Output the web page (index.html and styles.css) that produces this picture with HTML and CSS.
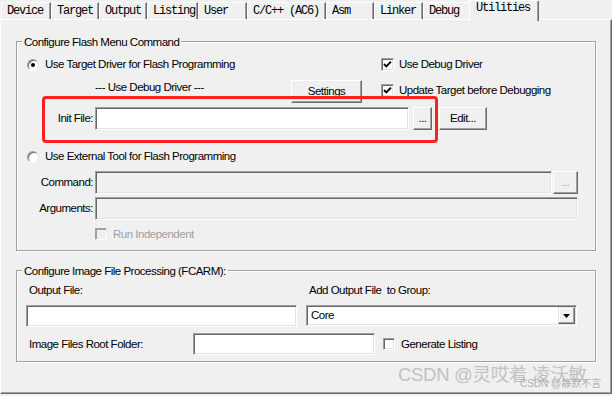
FILE: index.html
```html
<!DOCTYPE html>
<html lang="en">
<head>
    <meta charset="UTF-8">
    <title>Options for Target - Utilities</title>
    <link rel="stylesheet" href="styles.css">
</head>
<body>
    <div class="dialog">
        <div class="tabs">
            <div class="tab t-device">Device</div>
            <div class="tab t-target">Target</div>
            <div class="tab t-output">Output</div>
            <div class="tab t-listing">Listing</div>
            <div class="tab t-user">User</div>
            <div class="tab t-cc">C/C++ (AC6)</div>
            <div class="tab t-asm">Asm</div>
            <div class="tab t-linker">Linker</div>
            <div class="tab t-debug">Debug</div>
            <div class="tab active t-util">Utilities</div>
        </div>

        <div class="panel">
            <!-- Flash menu -->
            <div class="group flash">
                <div class="group-title">Configure Flash Menu Command</div>

                <div class="row r1">
                    <label class="opt driver"><span class="radio on"></span>Use Target Driver for Flash Programming</label>
                    <label class="opt chk"><span class="check"><svg viewBox="0 0 11 11" width="11" height="11"><polyline points="2,5 4.3,7.3 9,2.6" fill="none" stroke="#000" stroke-width="1.9"/></svg></span>Use Debug Driver</label>
                </div>

                <div class="row r2">
                    <span class="note">--- Use Debug Driver ---</span>
                    <button class="btn settings">Settings</button>
                    <label class="opt chk update"><span class="check"><svg viewBox="0 0 11 11" width="11" height="11"><polyline points="2,5 4.3,7.3 9,2.6" fill="none" stroke="#000" stroke-width="1.9"/></svg></span>Update Target before Debugging</label>
                </div>

                <div class="row r3">
                    <span class="field-label">Init File:</span>
                    <input type="text" class="input init">
                    <button class="btn browse">...</button>
                    <button class="btn edit">Edit...</button>
                </div>

                <div class="row r4">
                    <label class="opt driver"><span class="radio"></span>Use External Tool for Flash Programming</label>
                </div>

                <div class="row r5">
                    <span class="field-label">Command:</span>
                    <input type="text" class="input command" disabled>
                    <button class="btn browse-ext" disabled>...</button>
                </div>

                <div class="row r6">
                    <span class="field-label">Arguments:</span>
                    <input type="text" class="input arguments" disabled>
                </div>

                <div class="row r7">
                    <label class="opt chk off"><span class="check disabled"></span>Run Independent</label>
                </div>
            </div>

            <!-- FCARM -->
            <div class="group fcarm">
                <div class="group-title">Configure Image File Processing (FCARM):</div>

                <div class="row g1">
                    <span class="out-label">Output File:</span>
                    <span>Add Output File&nbsp; to Group:</span>
                </div>

                <div class="row g2">
                    <input type="text" class="input output">
                    <div class="select">
                        <span>Core</span>
                        <span class="drop"><svg viewBox="0 0 7 4" width="7" height="4"><polygon points="0,0 7,0 3.5,4" fill="#000"/></svg></span>
                    </div>
                </div>

                <div class="row g3">
                    <span class="root-label">Image Files Root Folder:</span>
                    <input type="text" class="input root">
                    <label class="opt chk listing"><span class="check"></span>Generate Listing</label>
                </div>
            </div>
        </div>

        <div class="highlight"></div>
        <div class="watermark">CSDN @灵哎着 凌沃敏</div>
        <div class="watermark small">CSDN @静默不言</div>
    </div>
</body>
</html>
```

FILE: styles.css
```css
/* Base */
body {
    margin: 0;
    background: #f0f0f0;
    font-family: "Liberation Sans", Arial, sans-serif;
    font-size: 11.5px;
    letter-spacing: -0.5px;
    line-height: 13px;
    color: #000;
}

.dialog {
    position: relative;
    width: 612px;
    height: 396px;
    overflow: hidden;
}

/* Tabs */
.tabs {
    display: flex;
    align-items: flex-end;
    height: 19px;
    padding-left: 1px;
    font-family: "Liberation Mono", "Courier New", monospace;
    font-size: 12px;
    letter-spacing: -1.2px;
}

.tab {
    box-sizing: border-box;
    height: 17px;
    padding: 1px 0 0 5px;
    line-height: 15px;
    border-top: 1px solid #fff;
    border-left: 1px solid #fff;
    border-right: 1px solid #696969;
    box-shadow: inset -1px 0 #a0a0a0;
    white-space: nowrap;
}

.t-device { width: 50px; }
.t-target { width: 48px; }
.t-output { width: 48px; }
.t-listing { width: 51px; }
.t-user { width: 49px; }
.t-cc { width: 79px; }
.t-asm { width: 48px; }
.t-linker { width: 49px; }
.t-debug { width: 48px; }

.tab.active {
    position: relative;
    z-index: 1;
    width: 70px;
    height: 21px;
    margin: 0 0 -2px -2px;
    padding: 0 0 0 6px;
    line-height: 14px;
    background: #f0f0f0;
    border-radius: 2px 2px 0 0;
}

/* Panel */
.panel {
    box-sizing: border-box;
    height: 375px;
    padding-left: 15px;
    border-top: 1px solid #fff;
    border-left: 1px solid #fff;
    border-right: 1px solid #696969;
    border-bottom: 1px solid #696969;
    box-shadow: inset -1px -1px #a0a0a0;
}

.group {
    box-sizing: border-box;
    width: 580px;
    border: 1px solid #a0a0a0;
    box-shadow: inset 1px 1px #fff, 1px 1px #fff;
}

.flash {
    margin-top: 21px;
    padding-bottom: 10px;
}

.fcarm {
    margin-top: 19px;
    padding-bottom: 6px;
}

.group-title {
    display: table;
    margin: -7px 0 0 5px;
    padding: 0 2px;
    line-height: 14px;
    background: #f0f0f0;
}

.row {
    display: flex;
    align-items: center;
}

.r1 { height: 13px; margin-top: 9px; }
.r2 { height: 23px; margin-top: 9px; align-items: flex-start; }
.r3 { height: 23px; margin-top: 4px; }
.r4 { height: 13px; margin-top: 20px; }
.r5 { height: 23px; margin-top: 8px; }
.r6 { height: 23px; margin-top: 3px; }
.r7 { height: 12px; margin-top: 8px; }

.g1 { height: 13px; margin-top: 6px; }
.g2 { height: 22px; margin-top: 8px; }
.g3 { height: 22px; margin-top: 6px; }

/* Options */
.opt {
    display: flex;
    align-items: center;
    gap: 6px;
    white-space: nowrap;
}

.driver {
    width: 354px;
    margin-left: 10px;
}

.chk { gap: 5px; }

.off { color: #a0a0a0; margin-left: 78px; gap: 6px; }

.radio {
    box-sizing: border-box;
    position: relative;
    width: 12px;
    height: 12px;
    border-radius: 50%;
    background: #fff;
    border: 1px solid;
    border-color: #a0a0a0 #e3e3e3 #fff #a0a0a0;
    box-shadow: inset 1px 1px #696969;
}

.radio.on::after {
    content: "";
    position: absolute;
    left: 3px;
    top: 3px;
    width: 4px;
    height: 4px;
    border-radius: 50%;
    background: #000;
}

.check {
    box-sizing: border-box;
    display: flex;
    width: 13px;
    height: 13px;
    background: #fff;
    border: 1px solid;
    border-color: #a0a0a0 #fff #fff #a0a0a0;
    box-shadow: inset 1px 1px #696969, inset -1px -1px #e3e3e3;
}

.check.disabled {
    width: 12px;
    height: 12px;
    background: #f0f0f0;
    box-shadow: inset 1px 1px #a0a0a0;
}

.note {
    width: 196px;
    margin: 1px 0 0 78px;
    white-space: nowrap;
}

.update { margin: 4px 0 0 19px; }

.field-label {
    width: 76px;
    text-align: right;
    white-space: nowrap;
}

/* Inputs and buttons */
.input {
    box-sizing: border-box;
    height: 23px;
    margin: 0;
    padding: 0 3px;
    font: inherit;
    background: #fff;
    border: 1px solid;
    border-color: #a0a0a0 #fff #fff #a0a0a0;
    box-shadow: inset 1px 1px #696969, inset -1px -1px #e3e3e3;
    outline: none;
}

.input:disabled { background: #f0f0f0; }

.init { width: 314px; margin-left: 2px; }
.command { width: 457px; margin-left: 2px; }
.arguments { width: 483px; margin-left: 2px; }
.output { width: 271px; height: 22px; margin-left: 9px; }
.root { width: 182px; height: 22px; }

.btn {
    box-sizing: border-box;
    height: 23px;
    margin: 0;
    padding: 0;
    font: inherit;
    letter-spacing: inherit;
    line-height: 13px;
    color: #000;
    background: #f0f0f0;
    border: 1px solid;
    border-color: #fff #696969 #696969 #fff;
    box-shadow: inset -1px -1px #a0a0a0;
}

.btn:disabled { color: #a0a0a0; }

.settings { width: 71px; }
.browse { width: 19px; margin-left: 4px; }
.edit { width: 48px; margin-left: 7px; }
.browse-ext { width: 25px; margin-left: 1px; }

.out-label { width: 280px; margin-left: 12px; }
.root-label { width: 164px; margin-left: 12px; }
.listing { margin-left: 8px; gap: 6px; }
.listing .check { width: 12px; height: 12px; }

.select {
    box-sizing: border-box;
    display: flex;
    align-items: center;
    justify-content: space-between;
    width: 271px;
    height: 21px;
    margin: 0 0 1px 9px;
    padding: 1px 1px 1px 4px;
    background: #fff;
    border: 1px solid;
    border-color: #a0a0a0 #fff #fff #a0a0a0;
    box-shadow: inset 1px 1px #696969, inset -1px -1px #e3e3e3;
}

.drop {
    box-sizing: border-box;
    display: flex;
    align-items: center;
    justify-content: center;
    width: 17px;
    height: 17px;
    background: #f0f0f0;
    border: 1px solid;
    border-color: #e3e3e3 #696969 #696969 #e3e3e3;
    box-shadow: inset -1px -1px #a0a0a0, inset 1px 1px #fff;
}

/* Annotation and watermark lying over the dialog */
.highlight {
    position: absolute;
    left: 42px;
    top: 96px;
    box-sizing: border-box;
    width: 396px;
    height: 47px;
    border: 3px solid #ff2020;
    border-radius: 4px;
}

.watermark {
    position: absolute;
    left: 398px;
    top: 364px;
    font-family: "Liberation Sans", "Noto Sans CJK SC", sans-serif;
    font-size: 18.5px;
    line-height: 22px;
    letter-spacing: -0.3px;
    color: #c2c2c2;
    white-space: nowrap;
}

.watermark.small {
    left: 520px;
    top: 378px;
    font-size: 10px;
    line-height: 12px;
    letter-spacing: 0;
    color: #b0b0b0;
}
```
